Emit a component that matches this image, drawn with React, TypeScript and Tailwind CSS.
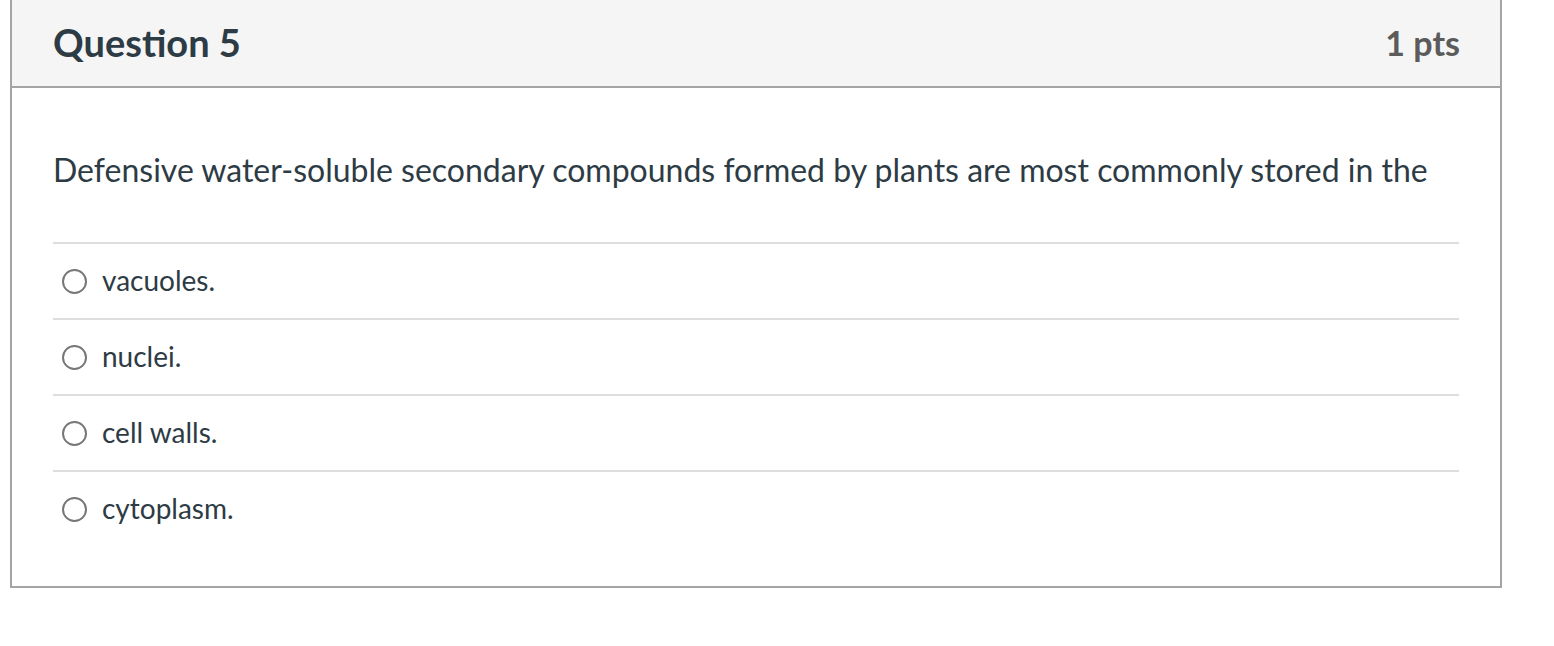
import React from "react";

const answers = ["vacuoles.", "nuclei.", "cell walls.", "cytoplasm."];

export default function App() {
  return (
    <div className="min-h-screen bg-white" style={{ fontFamily: "Lato, 'Open Sans', sans-serif" }}>
      <div className="ml-[10px] w-[1492px] border-x-2 border-b-2 border-[#a5a5a5]">
        {/* Header */}
        <div className="flex h-[88px] items-center justify-between border-b-2 border-[#a5a5a5] bg-[#f5f5f5] pl-[41px] pr-[40px] pb-[2px]">
          <h2 className="text-[38px] font-bold text-[#2d3b45]">Question 5</h2>
          <span className="text-[34px] font-bold text-[#5b5b5b]">1 pts</span>
        </div>

        {/* Body */}
        <div className="px-[41px] pt-[61px] pb-[40px]">
          <p className="text-[32px] leading-[42px] text-[#2d3b45]">
            Defensive water-soluble secondary compounds formed by plants are most commonly stored in the
          </p>
          <div className="mt-[51px]">
            {answers.map((a) => (
              <div key={a} className="flex h-[76px] items-center gap-[15px] border-t-2 border-[#dddddd] pb-[2px] pl-[9px]">
                <span className="mt-[2px] h-[25px] w-[25px] rounded-full border-2 border-[#777777]" />
                <span className="text-[28px] text-[#2d3b45]">{a}</span>
              </div>
            ))}
          </div>
        </div>
      </div>
    </div>
  );
}
